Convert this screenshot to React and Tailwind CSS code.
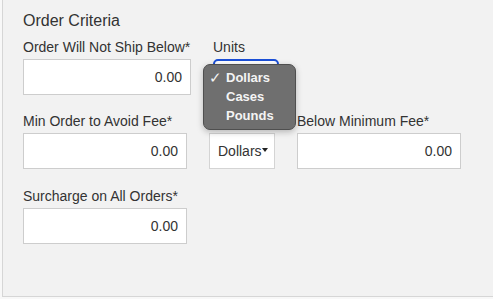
import React from 'react';

function Field({ label, width, className = '' }) {
  return (
    <div className={className}>
      <div className="text-[14px] leading-[16px] text-[#333] whitespace-nowrap">{label}</div>
      <input
        readOnly
        defaultValue="0.00"
        className={`mt-[4px] h-[36px] ${width} border border-[#cdcdcd] bg-white px-[8px] text-right text-[14px] text-[#333] outline-none`}
      />
    </div>
  );
}

export default function App() {
  return (
    <div className="w-[493px] h-[299px] overflow-hidden bg-[#f8f8f8]" style={{ fontFamily: '"Liberation Sans", Arial, sans-serif' }}>
      <div className="ml-[2px] w-[520px] h-[297px] border-l border-b border-[#d6d6d6] bg-[#f2f2f2] pl-[20px] pt-[11px]">
        <h2 className="text-[16px] leading-[20px] text-[#333]">Order Criteria</h2>

        {/* row 1 */}
        <div className="mt-[8px] flex gap-[22px]">
          <Field label="Order Will Not Ship Below*" width="w-[168px]" />
          <div>
            <div className="text-[14px] leading-[16px] text-[#333]">Units</div>
            <div className="relative mt-[4px] w-[66px] h-[36px] rounded-[5px] border-2 border-[#1b4fd6] bg-white">
              <div className="absolute left-[-12px] top-[3px] z-10 w-[93px] h-[66px] rounded-[7px] border border-[#4f4f4f] bg-[#6f6f6f] pt-[3px] pl-[5px] shadow-[0_2px_6px_rgba(0,0,0,0.25)]">
                <div className="flex text-[13px] leading-[19px] font-bold text-[#f4f4f4]">
                  <span className="w-[17px] text-[15px] font-normal">✓</span>
                  <span>Dollars</span>
                </div>
                <div className="flex text-[13px] leading-[19px] font-bold text-[#f4f4f4]">
                  <span className="w-[17px]"></span>
                  <span>Cases</span>
                </div>
                <div className="flex text-[13px] leading-[19px] font-bold text-[#f4f4f4]">
                  <span className="w-[17px]"></span>
                  <span>Pounds</span>
                </div>
              </div>
            </div>
          </div>
        </div>

        {/* row 2 */}
        <div className="mt-[18px] flex items-end gap-[22px]">
          <Field label="Min Order to Avoid Fee*" width="w-[164px]" />
          <div className="flex w-[66px] h-[36px] items-center border border-[#d4d4d4] bg-white pl-[8px] text-[14px] text-[#333]">
            <span>Dollars</span>
            <svg width="6" height="4" viewBox="0 0 6 4" className="mb-[3px]">
              <path d="M0 0h6L3 4z" fill="#222" />
            </svg>
          </div>
          <Field label="Below Minimum Fee*" width="w-[164px]" />
        </div>

        {/* row 3 */}
        <Field label="Surcharge on All Orders*" width="w-[164px]" className="mt-[19px]" />
      </div>
    </div>
  );
}
